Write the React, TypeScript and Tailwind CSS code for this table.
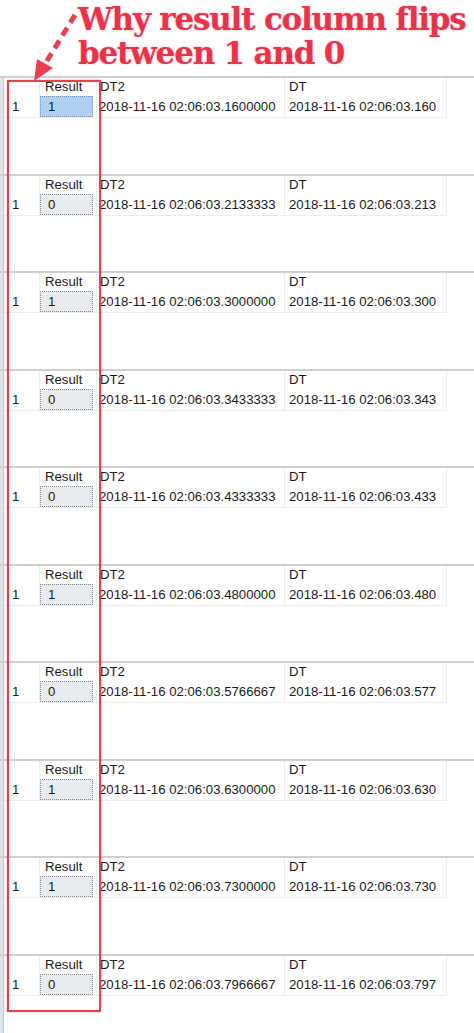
import React from 'react'

interface RowData {
  result: string
  dt2: string
  dt: string
  selected?: boolean
}

const rows: RowData[] = [
  { result: '1', dt2: '2018-11-16 02:06:03.1600000', dt: '2018-11-16 02:06:03.160', selected: true },
  { result: '0', dt2: '2018-11-16 02:06:03.2133333', dt: '2018-11-16 02:06:03.213' },
  { result: '1', dt2: '2018-11-16 02:06:03.3000000', dt: '2018-11-16 02:06:03.300' },
  { result: '0', dt2: '2018-11-16 02:06:03.3433333', dt: '2018-11-16 02:06:03.343' },
  { result: '0', dt2: '2018-11-16 02:06:03.4333333', dt: '2018-11-16 02:06:03.433' },
  { result: '1', dt2: '2018-11-16 02:06:03.4800000', dt: '2018-11-16 02:06:03.480' },
  { result: '0', dt2: '2018-11-16 02:06:03.5766667', dt: '2018-11-16 02:06:03.577' },
  { result: '1', dt2: '2018-11-16 02:06:03.6300000', dt: '2018-11-16 02:06:03.630' },
  { result: '1', dt2: '2018-11-16 02:06:03.7300000', dt: '2018-11-16 02:06:03.730' },
  { result: '0', dt2: '2018-11-16 02:06:03.7966667', dt: '2018-11-16 02:06:03.797' },
]

const ResultGrid = ({ result, dt2, dt, selected }: RowData) => {
  return (
    <div className="flex h-[97.5px] border-t-2 border-[#cfcfcf]">
      {/* left edge strip */}
      <div className="w-[3px] bg-[#dde5ec]" />
      <div className="w-px bg-[#c4c4c4]" />
      <div className="flex-1 bg-white">
        <div className="flex h-[18px] whitespace-nowrap text-[13.2px] leading-[18px] text-[#1a1a1a]">
          <div className="w-[36px] border-r border-[#ececec]" />
          <div className="w-[57px] border-r border-[#ececec] pl-[5px]">Result</div>
          <div className="w-[188px] border-r border-[#ececec] pl-[3px]">DT2</div>
          <div className="w-[162px] border-r border-[#ececec] pl-[4px]">DT</div>
        </div>
        <div className="flex h-[22px] whitespace-nowrap text-[13.2px] leading-[20px] text-[#1a1a1a]">
          <div className="w-[36px] border-b border-r border-[#ececec] pl-[8px] pt-[1px]">1</div>
          <div className="w-[57px] border-b border-r border-[#ececec] pr-[3px]">
            <div
              className={
                selected
                  ? 'h-full w-full border border-dotted border-[#7a8fa8] bg-[#afd0f0] pl-[7px]'
                  : 'h-full w-full border border-dotted border-[#8a8a8a] bg-[#e7ebef] pl-[7px]'
              }
            >
              {result}
            </div>
          </div>
          <div className="w-[188px] border-b border-r border-[#ececec] pl-[2px] pt-[1px]">{dt2}</div>
          <div className="w-[162px] border-b border-r border-[#ececec] pl-[4px] pt-[1px]">{dt}</div>
        </div>
      </div>
    </div>
  )
}

export default function App() {
  return (
    <div className="relative h-[1033px] w-[474px] overflow-hidden bg-white font-['Liberation_Sans',Arial,sans-serif]">
      {/* title */}
      <div className="h-[76px] whitespace-nowrap pl-[78px] pt-[2px] font-['DejaVu_Serif',serif] text-[31px] font-bold leading-[34px] tracking-[-1.2px] text-[#e8344a] [text-shadow:0_0_2px_rgba(232,52,74,0.45)]">
        <div>Why result column flips</div>
        <div>between 1 and 0</div>
      </div>

      {/* dashed arrow */}
      <svg className="absolute left-0 top-0" width="100" height="90" viewBox="0 0 100 90">
        <line x1="75" y1="15" x2="45" y2="64" stroke="#e8404f" strokeWidth="5" strokeDasharray="9 6" strokeLinecap="butt" />
        <polygon points="34,81 37,59 53,68" fill="#e8404f" />
      </svg>

      <div>
        {rows.map((r, i) => (
          <ResultGrid key={i} {...r} />
        ))}
      </div>

      {/* red highlight box around Result column */}
      <div className="absolute left-[7px] top-[80px] h-[932px] w-[94px] border-2 border-[#e0434f] shadow-[0_0_2px_rgba(224,67,79,0.5)]" />
    </div>
  )
}
